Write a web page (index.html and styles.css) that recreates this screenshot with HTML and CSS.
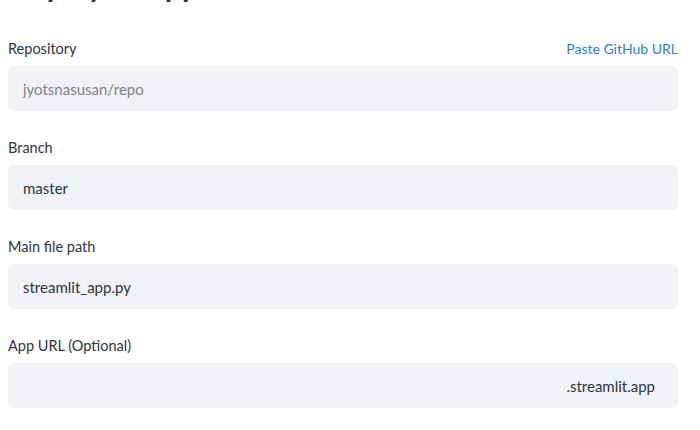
FILE: index.html
```html
<!DOCTYPE html>
<html>
<head>
<meta charset="utf-8">
<link rel="stylesheet" href="styles.css">
</head>
<body>
<div class="page">
  <h1 class="title">Deploy an app</h1>
  <div class="field">
    <div class="label-row">
      <span class="label">Repository</span>
      <a class="link">Paste GitHub URL</a>
    </div>
    <div class="input"><span class="placeholder">jyotsnasusan/repo</span></div>
  </div>
  <div class="field">
    <div class="label-row"><span class="label">Branch</span></div>
    <div class="input"><span class="value">master</span></div>
  </div>
  <div class="field">
    <div class="label-row"><span class="label">Main file path</span></div>
    <div class="input"><span class="value">streamlit_app.py</span></div>
  </div>
  <div class="field">
    <div class="label-row"><span class="label">App URL (Optional)</span></div>
    <div class="input input-suffix"><span class="value">.streamlit.app</span></div>
  </div>
</div>
</body>
</html>
```

FILE: styles.css
```css
* { box-sizing: border-box; }
html, body { margin: 0; padding: 0; background: #ffffff; }
body {
  font-family: "Lato", "Noto Sans", sans-serif;
  color: #31333f;
  width: 700px;
  height: 430px;
  overflow: hidden;
}
.page {
  padding: 0 22px 0 8px;
  display: flex;
  flex-direction: column;
  gap: 24px;
}
.title {
  margin: -33px 0 0 0;
  font-size: 30px;
  line-height: 36px;
  font-weight: 700;
  height: 36px;
  margin-bottom: 9px;
  color: #31333f;
}
.field { display: flex; flex-direction: column; gap: 6px; }
.label-row {
  display: flex;
  justify-content: space-between;
  align-items: center;
  height: 24px;
  font-size: 14.5px;
}
.label { color: #31333f; }
.link { color: #1c83e1; text-decoration: none; font-size: 14px; }
.input {
  height: 45px;
  background: #f0f2f6;
  border-radius: 6px;
  display: flex;
  align-items: center;
  padding: 0 15px;
  font-size: 15px;
}
.placeholder { color: #7f818a; }
.value { color: #31333f; }
.input-suffix { justify-content: flex-end; padding-right: 23px; }
```
